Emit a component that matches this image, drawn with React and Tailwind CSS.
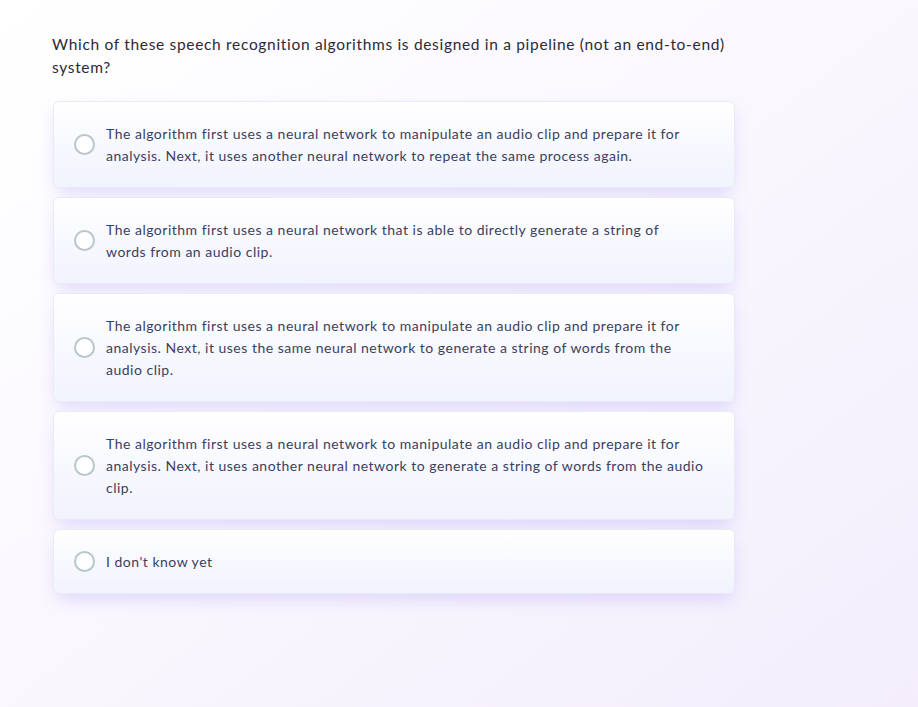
import { useState } from 'react';

const options = [
  {
    id: 1,
    lines: [
      'The algorithm first uses a neural network to manipulate an audio clip and prepare it for',
      'analysis. Next, it uses another neural network to repeat the same process again.',
    ],
  },
  {
    id: 2,
    lines: [
      'The algorithm first uses a neural network that is able to directly generate a string of',
      'words from an audio clip.',
    ],
  },
  {
    id: 3,
    lines: [
      'The algorithm first uses a neural network to manipulate an audio clip and prepare it for',
      'analysis. Next, it uses the same neural network to generate a string of words from the',
      'audio clip.',
    ],
  },
  {
    id: 4,
    lines: [
      'The algorithm first uses a neural network to manipulate an audio clip and prepare it for',
      'analysis. Next, it uses another neural network to generate a string of words from the audio',
      'clip.',
    ],
  },
  { id: 5, lines: ["I don't know yet"] },
];

const App = () => {
  const [selected, setSelected] = useState(null);

  return (
    <div
      className="min-h-[707px] w-full bg-gradient-to-br from-white via-[#faf7fe] to-[#f3edfc] px-[52px] pt-[33px] pb-10"
      style={{ fontFamily: 'Lato, "Noto Sans", sans-serif' }}
    >
      {/* Question */}
      <h2 className="text-[15.5px] leading-[23px] tracking-[0.68px] text-[#2b2b36] max-w-[720px] mb-[22px]">
        Which of these speech recognition algorithms is designed in a pipeline (not an end-to-end)
        <br />
        system?
      </h2>

      {/* Options */}
      <div className="flex flex-col gap-[9px] w-[683px] pl-px">
        {options.map((opt) => (
          <button
            key={opt.id}
            onClick={() => setSelected(opt.id)}
            className="flex items-center gap-[11px] text-left rounded-[6px] border border-[#ebe9f3] bg-gradient-to-b from-white to-[#f1f3fe] pl-[20px] pr-6 py-[20.5px] shadow-[0_8px_18px_-4px_rgba(140,120,245,0.28)]"
          >
            <span
              className={`shrink-0 w-[21px] h-[21px] rounded-full border-2 ${
                selected === opt.id ? 'border-[#5b5bd6] bg-[#5b5bd6]' : 'border-[#b9c7cb] bg-white'
              }`}
            />
            <span className="text-[14px] leading-[22px] tracking-[0.5px] text-[#3b3f60] whitespace-nowrap">
              {opt.lines.map((l, i) => (
                <span key={i} className="block">
                  {l}
                </span>
              ))}
            </span>
          </button>
        ))}
      </div>
    </div>
  );
};

export default App;
